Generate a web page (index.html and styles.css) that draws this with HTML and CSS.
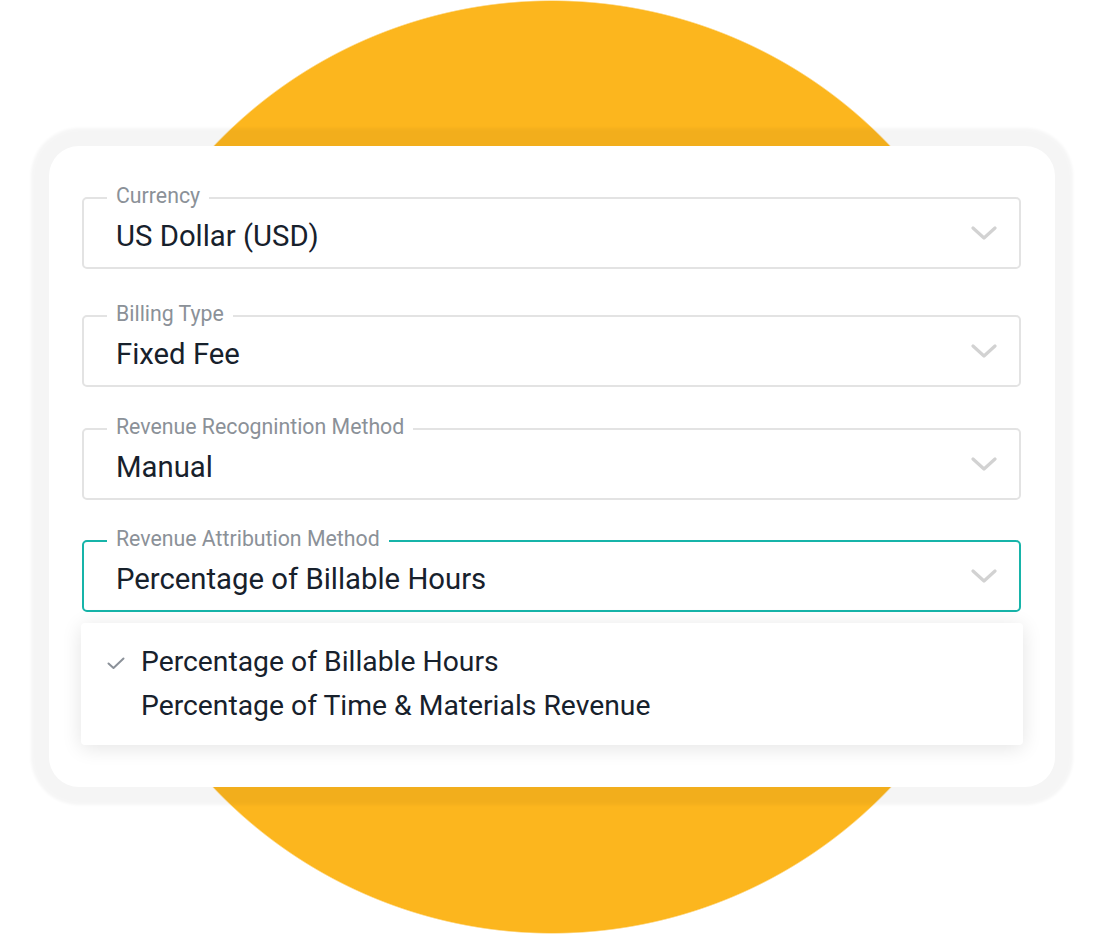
FILE: index.html
```html
<!DOCTYPE html>
<html lang="en">
<head>
<meta charset="utf-8">
<title>Billing settings</title>
<link rel="stylesheet" href="styles.css">
</head>
<body>
<div class="stage">
  <div class="card">
    <div class="field field-first">
      <span class="label">Currency</span>
      <div class="row">
        <span class="value">US Dollar (USD)</span>
        <svg class="chev" width="26" height="14" viewBox="0 0 26 14"><path d="M2 2 L13 12 L24 2" fill="none" stroke="#d2d2d2" stroke-width="3.2" stroke-linecap="round" stroke-linejoin="round"/></svg>
      </div>
    </div>
    <div class="field field-second">
      <span class="label">Billing Type</span>
      <div class="row">
        <span class="value">Fixed Fee</span>
        <svg class="chev" width="26" height="14" viewBox="0 0 26 14"><path d="M2 2 L13 12 L24 2" fill="none" stroke="#d2d2d2" stroke-width="3.2" stroke-linecap="round" stroke-linejoin="round"/></svg>
      </div>
    </div>
    <div class="field field-third">
      <span class="label">Revenue Recognintion Method</span>
      <div class="row">
        <span class="value">Manual</span>
        <svg class="chev" width="26" height="14" viewBox="0 0 26 14"><path d="M2 2 L13 12 L24 2" fill="none" stroke="#d2d2d2" stroke-width="3.2" stroke-linecap="round" stroke-linejoin="round"/></svg>
      </div>
    </div>
    <div class="field field-active">
      <span class="label">Revenue Attribution Method</span>
      <div class="row">
        <span class="value">Percentage of Billable Hours</span>
        <svg class="chev" width="26" height="14" viewBox="0 0 26 14"><path d="M2 2 L13 12 L24 2" fill="none" stroke="#d2d2d2" stroke-width="3.2" stroke-linecap="round" stroke-linejoin="round"/></svg>
      </div>
    </div>
    <ul class="menu">
      <li class="item selected">
        <svg class="check" width="18" height="13" viewBox="0 0 18 13"><path d="M1.5 6.5 L6.5 11 L16.5 1.5" fill="none" stroke="#8b9199" stroke-width="2" stroke-linecap="round" stroke-linejoin="round"/></svg>
        <span>Percentage of Billable Hours</span>
      </li>
      <li class="item">
        <span class="spacer"></span>
        <span>Percentage of Time &amp; Materials Revenue</span>
      </li>
    </ul>
  </div>
</div>
</body>
</html>
```

FILE: styles.css
```css
html, body {
  margin: 0;
  padding: 0;
  background: #ffffff;
}

body {
  font-family: Roboto, "Liberation Sans", Arial, sans-serif;
  width: 1104px;
  height: 934px;
  overflow: hidden;
}

.stage {
  width: 1104px;
  height: 934px;
  box-sizing: border-box;
  padding: 146px 0 0 49px;
  background: radial-gradient(circle 467px at 552px 467px, #fcb61e 465.5px, rgba(252, 182, 30, 0) 467px);
}

.card {
  width: 1006px;
  height: 641px;
  box-sizing: border-box;
  padding: 51px 34px 42px 33px;
  background: #ffffff;
  border-radius: 30px;
  box-shadow: 0 0 3px 18px rgba(0, 0, 0, 0.04);
}

.field {
  height: 72px;
  box-sizing: border-box;
  border: 2px solid #e3e3e3;
  border-radius: 5px;
  padding: 0 22px 0 23px;
}

.field-first { margin-bottom: 46px; }
.field-second { margin-bottom: 41px; }
.field-third { margin-bottom: 40px; }

.field-active {
  border-color: #17b4a9;
  margin-bottom: 11px;
}

.label {
  display: block;
  width: max-content;
  margin-top: -15px;
  padding: 0 9px;
  background: #ffffff;
  color: #8b9198;
  font-size: 21.3px;
  line-height: 24px;
}

.row {
  display: flex;
  align-items: center;
  justify-content: space-between;
  margin-top: 11px;
  padding-left: 9px;
}

.value {
  color: #17212c;
  font-size: 29.3px;
  line-height: 34px;
}

.chev {
  display: block;
  margin-bottom: 6px;
}

.menu {
  list-style: none;
  margin: 0 -2px 0 -1px;
  padding: 17px 0 16px 26px;
  height: 122px;
  box-sizing: border-box;
  background: #ffffff;
  border-radius: 4px;
  box-shadow: 0 3px 20px rgba(0, 0, 0, 0.11);
}

.item {
  display: flex;
  align-items: center;
  gap: 16px;
  color: #17212c;
  font-size: 28.3px;
  line-height: 44px;
}

.check {
  display: block;
  flex: none;
  margin-top: 2px;
}

.spacer {
  display: block;
  width: 18px;
  flex: none;
}
```
